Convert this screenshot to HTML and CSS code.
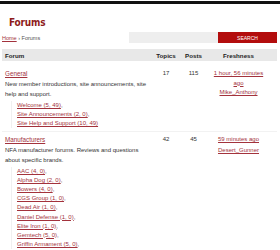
FILE: index.html
```html
<!DOCTYPE html>
<html lang="en">
<head>
    <meta charset="UTF-8">
    <meta name="viewport" content="width=device-width, initial-scale=1.0">
    <title>Forums</title>
    <link rel="stylesheet" href="styles.css">
</head>
<body>
    <div class="topbar"></div>
    <div class="page">
        <h1 class="title">Forums</h1>

        <div class="toolbar">
            <div class="breadcrumb"><a href="#">Home</a> › Forums</div>
            <form class="search">
                <input type="text" class="search-input">
                <button type="button" class="search-btn">SEARCH</button>
            </form>
        </div>

        <table class="forums">
            <thead>
                <tr>
                    <th class="col-forum">Forum</th>
                    <th class="col-topics">Topics</th>
                    <th class="col-posts">Posts</th>
                    <th class="col-fresh">Freshness</th>
                </tr>
            </thead>
            <tbody>
                <tr>
                    <td class="col-forum">
                        <a href="#" class="forum-name">General</a>
                        <p class="forum-desc">New member introductions, site announcements, site help and support.</p>
                        <ul class="subforums">
                            <li><a href="#">Welcome (5, 49)</a>,</li>
                            <li><a href="#">Site Announcements (2, 0)</a>,</li>
                            <li><a href="#">Site Help and Support (10, 49)</a></li>
                        </ul>
                    </td>
                    <td class="col-topics">17</td>
                    <td class="col-posts">115</td>
                    <td class="col-fresh">
                        <a href="#">1 hour, 56 minutes ago</a>
                        <a href="#" class="author">Mike_Anthony</a>
                    </td>
                </tr>
                <tr>
                    <td class="col-forum">
                        <a href="#" class="forum-name">Manufacturers</a>
                        <p class="forum-desc">NFA manufacturer forums. Reviews and questions about specific brands.</p>
                        <ul class="subforums">
                            <li><a href="#">AAC (4, 0)</a>,</li>
                            <li><a href="#">Alpha Dog (2, 0)</a>,</li>
                            <li><a href="#">Bowers (4, 0)</a>,</li>
                            <li><a href="#">CGS Group (1, 0)</a>,</li>
                            <li><a href="#">Dead Air (1, 0)</a>,</li>
                            <li><a href="#">Daniel Defense (1, 0)</a>,</li>
                            <li><a href="#">Elite Iron (1, 0)</a>,</li>
                            <li><a href="#">Gemtech (5, 0)</a>,</li>
                            <li><a href="#">Griffin Armament (5, 0)</a>,</li>
                        </ul>
                    </td>
                    <td class="col-topics">42</td>
                    <td class="col-posts">45</td>
                    <td class="col-fresh">
                        <a href="#">59 minutes ago</a>
                        <a href="#" class="author">Desert_Gunner</a>
                    </td>
                </tr>
            </tbody>
        </table>
    </div>
</body>
</html>
```

FILE: styles.css
```css
body {
    margin: 0;
    background-color: #fff;
    font-family: 'Liberation Sans', Arial, sans-serif;
    color: #333;
    font-size: 6px;
}
a {
    color: #a3323c;
}
.topbar {
    height: 3px;
    margin-top: 1px;
    background-color: #111;
}
.page {
    padding: 0 3px 0 2px;
}
.title {
    font-family: 'DejaVu Sans Condensed', 'DejaVu Sans', sans-serif;
    font-stretch: condensed;
    font-size: 10px;
    font-weight: bold;
    color: #8e1b1b;
    margin: 13px 0 0 7px;
    letter-spacing: -0.2px;
}
.toolbar {
    display: flex;
    justify-content: space-between;
    align-items: center;
    margin-top: 4px;
}
.breadcrumb {
    font-size: 5.5px;
    color: #555;
}
.search {
    display: flex;
    margin: 0;
}
.search-input {
    width: 89px;
    height: 11px;
    border: none;
    padding: 0;
    background-color: #eeeeee;
}
.search-btn {
    width: 59px;
    height: 11px;
    border: none;
    padding: 0;
    background-color: #b30d0d;
    color: white;
    font-family: 'Liberation Sans', Arial, sans-serif;
    font-size: 5px;
}
.forums {
    width: 100%;
    border-collapse: collapse;
    table-layout: fixed;
    margin-top: 6px;
}
.forums th {
    background-color: #e8e8e8;
    font-weight: bold;
    font-size: 6.2px;
    color: #222;
    height: 12px;
    padding: 0 3px;
}
.forums td {
    vertical-align: top;
    padding: 8px 3px 3px;
    line-height: 9.3px;
}
.forums tbody tr + tr td {
    border-top: 1px solid #f2f2f2;
    padding-top: 3px;
}
.col-forum {
    width: 144px;
    text-align: left;
}
.col-topics {
    width: 22px;
    text-align: center;
}
.col-posts {
    width: 21px;
    text-align: center;
}
.col-fresh {
    text-align: center;
}
.forums .col-fresh {
    padding-right: 10px;
}
.forums td.col-fresh {
    line-height: 9.6px;
}
.col-fresh a {
    display: block;
}
.forums tbody tr + tr td.col-fresh .author {
    margin-top: 1.5px;
}
.forum-name {
    display: inline-block;
    font-size: 6.3px;
    line-height: 10px;
}
.forum-desc {
    margin: 1px 0 0;
}
.subforums {
    list-style: none;
    margin: 2px 0 0 6px;
    padding: 0 0 0 5px;
    line-height: 9.1px;
    border-left: 1px solid #f0f0f0;
}
```
